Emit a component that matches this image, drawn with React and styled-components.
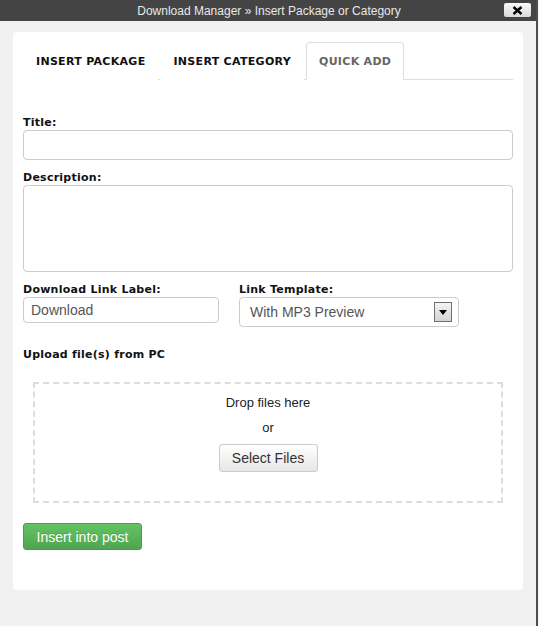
import React from "react"
import styled, { createGlobalStyle } from "styled-components"

const GlobalStyle = createGlobalStyle`
  html, body {
    margin: 0;
    padding: 0;
    background: #f1f1f1;
  }
  body {
    font-family: "Liberation Sans", Arial, sans-serif;
    font-size: 13px;
    color: #333;
  }
`

const TABS = ["Insert Package", "Insert Category", "Quick Add"]

export default function App() {
  return (
    <Window>
      <GlobalStyle />
      <TitleBar>
        <TitleText>Download Manager » Insert Package or Category</TitleText>
        <CloseButton aria-label="close">
          <svg width="11" height="9" viewBox="0 0 11 9">
            <path d="M1.5 1 L9.5 8 M9.5 1 L1.5 8" stroke="#000" strokeWidth="2.4" />
          </svg>
        </CloseButton>
      </TitleBar>

      <Body>
        <Card>
          <TabBar>
            {TABS.map((t, i) => (
              <Tab key={t} $active={i === 2}>
                {t}
              </Tab>
            ))}
          </TabBar>

          <Form>
            <Label>Title:</Label>
            <TextInput />

            <Label $top={11}>Description:</Label>
            <TextArea />

            <Columns>
              <Field>
                <Label>Download Link Label:</Label>
                <SmallInput defaultValue="Download" />
              </Field>
              <Field>
                <Label>Link Template:</Label>
                <SelectBox>
                  <span>With MP3 Preview</span>
                  <SelectArrow>
                    <svg width="8" height="5" viewBox="0 0 8 5">
                      <path d="M0 0 H8 L4 5 Z" fill="#000" />
                    </svg>
                  </SelectArrow>
                </SelectBox>
              </Field>
            </Columns>

            <Label $top={21}>Upload file(s) from PC</Label>

            <DropZone>
              <DropText>Drop files here</DropText>
              <DropText>or</DropText>
              <SelectFiles>Select Files</SelectFiles>
            </DropZone>

            <InsertButton>Insert into post</InsertButton>
          </Form>
        </Card>
      </Body>
    </Window>
  )
}

const Window = styled.div`
  width: 536px;
  min-height: 626px;
  border-right: 2px solid #4d4d4d;
  background: #f1f1f1;
`

const TitleBar = styled.div`
  height: 21px;
  background: #444444;
  display: flex;
  align-items: center;
  justify-content: center;
  position: relative;
`

const TitleText = styled.div`
  color: #e8e8e8;
  font-size: 12px;
  margin-left: 2px;
`

const CloseButton = styled.div`
  position: absolute;
  right: 5px;
  top: 3px;
  width: 27px;
  height: 14px;
  border-radius: 2px;
  background: linear-gradient(#fafafa, #d9d9d9);
  display: flex;
  align-items: center;
  justify-content: center;
`

const Body = styled.div`
  padding: 11px 13px 36px 13px;
`

const Card = styled.div`
  background: #fff;
  border-radius: 4px;
  padding: 10px 10px 40px 10px;
`

const TabBar = styled.div`
  display: flex;
  border-bottom: 1px solid #dddddd;
`

const Tab = styled.div`
  font-family: "DejaVu Sans", Verdana, sans-serif;
  font-weight: bold;
  font-size: 11px;
  text-transform: uppercase;
  letter-spacing: 0.3px;
  height: 36px;
  line-height: 38px;
  padding: 0 12px;
  margin-right: 2px;
  margin-bottom: -1px;
  border: 1px solid ${(p) => (p.$active ? "#dddddd" : "transparent")};
  border-bottom-color: ${(p) => (p.$active ? "#fff" : "transparent")};
  border-radius: 4px 4px 0 0;
  background: #fff;
  color: ${(p) => (p.$active ? "#666" : "#111")};
`

const Form = styled.div`
  padding-top: 36px;
  display: flex;
  flex-direction: column;
`

const Label = styled.div`
  font-family: "DejaVu Sans", Verdana, sans-serif;
  font-weight: bold;
  font-size: 11px;
  letter-spacing: 0.25px;
  line-height: 14px;
  color: #111;
  margin-top: ${(p) => p.$top || 0}px;
`

const TextInput = styled.input`
  box-sizing: border-box;
  height: 30px;
  width: 100%;
  margin: 0;
  border: 1px solid #cccccc;
  border-radius: 4px;
  background: #fff;
  outline: none;
`

const TextArea = styled.textarea`
  box-sizing: border-box;
  height: 87px;
  width: 100%;
  border: 1px solid #cccccc;
  border-radius: 4px;
  resize: none;
  outline: none;
  margin: 0;
  display: block;
`

const Columns = styled.div`
  margin-top: 11px;
  display: grid;
  grid-template-columns: 196px 220px;
  column-gap: 20px;
`

const Field = styled.div`
  display: flex;
  flex-direction: column;
`

const SmallInput = styled.input`
  box-sizing: border-box;
  height: 26px;
  width: 100%;
  margin: 0;
  border: 1px solid #cccccc;
  border-radius: 4px;
  padding: 0 7px;
  font-family: "Liberation Sans", Arial, sans-serif;
  font-size: 14px;
  color: #555;
  outline: none;
`

const SelectBox = styled.div`
  box-sizing: border-box;
  height: 30px;
  border: 1px solid #cccccc;
  border-radius: 4px;
  padding: 0 6px 0 10px;
  display: flex;
  align-items: center;
  justify-content: space-between;
  font-size: 14px;
  color: #555;
`

const SelectArrow = styled.div`
  box-sizing: border-box;
  width: 18px;
  height: 20px;
  border: 1px solid #707070;
  background: linear-gradient(#f4f4f4, #d4d4d4);
  display: flex;
  align-items: center;
  justify-content: center;
`

const DropZone = styled.div`
  box-sizing: border-box;
  margin: 20px 10px 0 10px;
  height: 121px;
  border: 2px dashed #dddddd;
  display: flex;
  flex-direction: column;
  align-items: center;
  padding-top: 11px;
`

const DropText = styled.div`
  font-size: 13px;
  line-height: 15px;
  color: #222;
  margin-bottom: 10px;
`

const SelectFiles = styled.button`
  margin-top: -1px;
  height: 28px;
  width: 99px;
  border: 1px solid #cccccc;
  border-radius: 3px;
  background: linear-gradient(#ffffff, #e6e6e6);
  font-family: "Liberation Sans", Arial, sans-serif;
  font-size: 14px;
  color: #333;
`

const InsertButton = styled.button`
  align-self: flex-start;
  margin-top: 20px;
  height: 27px;
  width: 119px;
  border: 1px solid #4a9c4c;
  border-radius: 3px;
  background: linear-gradient(#62c462, #4fa551);
  color: #fff;
  font-family: "Liberation Sans", Arial, sans-serif;
  font-size: 14px;
  text-shadow: 0 -1px 0 rgba(0, 0, 0, 0.15);
`
